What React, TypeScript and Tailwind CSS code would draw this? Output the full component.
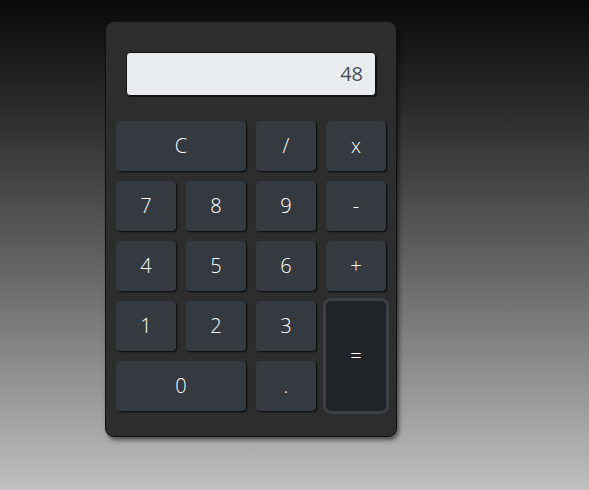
import React from 'react';

const keys: { label: string; span?: string; eq?: boolean }[] = [
  { label: 'C', span: 'col-span-2' },
  { label: '/' },
  { label: 'x' },
  { label: '7' },
  { label: '8' },
  { label: '9' },
  { label: '-' },
  { label: '4' },
  { label: '5' },
  { label: '6' },
  { label: '+' },
  { label: '1' },
  { label: '2' },
  { label: '3' },
  { label: '=', span: 'row-span-2', eq: true },
  { label: '0', span: 'col-span-2' },
  { label: '.' },
];

export default function App() {
  return (
    <div className="min-h-screen bg-gradient-to-b from-[#0a0a0a] to-[#c0c0c0] pl-[105px] pt-[21px] font-['Open_Sans','Liberation_Sans',sans-serif] font-light">
      <div className="w-[292px] rounded-[9px] border border-[#111] bg-[#2d2d2d] p-[10px] pb-[25px] shadow-[2px_3px_4px_rgba(0,0,0,0.55)]">
        <div className="px-[10px] pt-[20px] pb-[25px]">
          <div className="flex h-[44px] items-center justify-end rounded-[4px] border border-[#111] bg-[#e9ecef] pr-[12px] text-[20px] font-normal text-[#4a4f55] shadow-[1px_1px_1px_rgba(0,0,0,0.6)]">
            48
          </div>
        </div>
        {/* keypad */}
        <div className="grid grid-cols-[repeat(4,60px)] auto-rows-[50px] gap-[10px]">
          {keys.map((k) => (
            <button
              key={k.label}
              className={`${k.span ?? ''} flex items-center justify-center text-[20px] leading-none text-white ${
                k.eq
                  ? 'rounded-[5px] bg-[#212529] shadow-[0_0_0_3px_#3c4044]'
                  : 'rounded-[4px] bg-[#343a40] shadow-[1px_1px_2px_rgba(0,0,0,0.85)]'
              }`}
            >
              {k.label}
            </button>
          ))}
        </div>
      </div>
    </div>
  );
}
